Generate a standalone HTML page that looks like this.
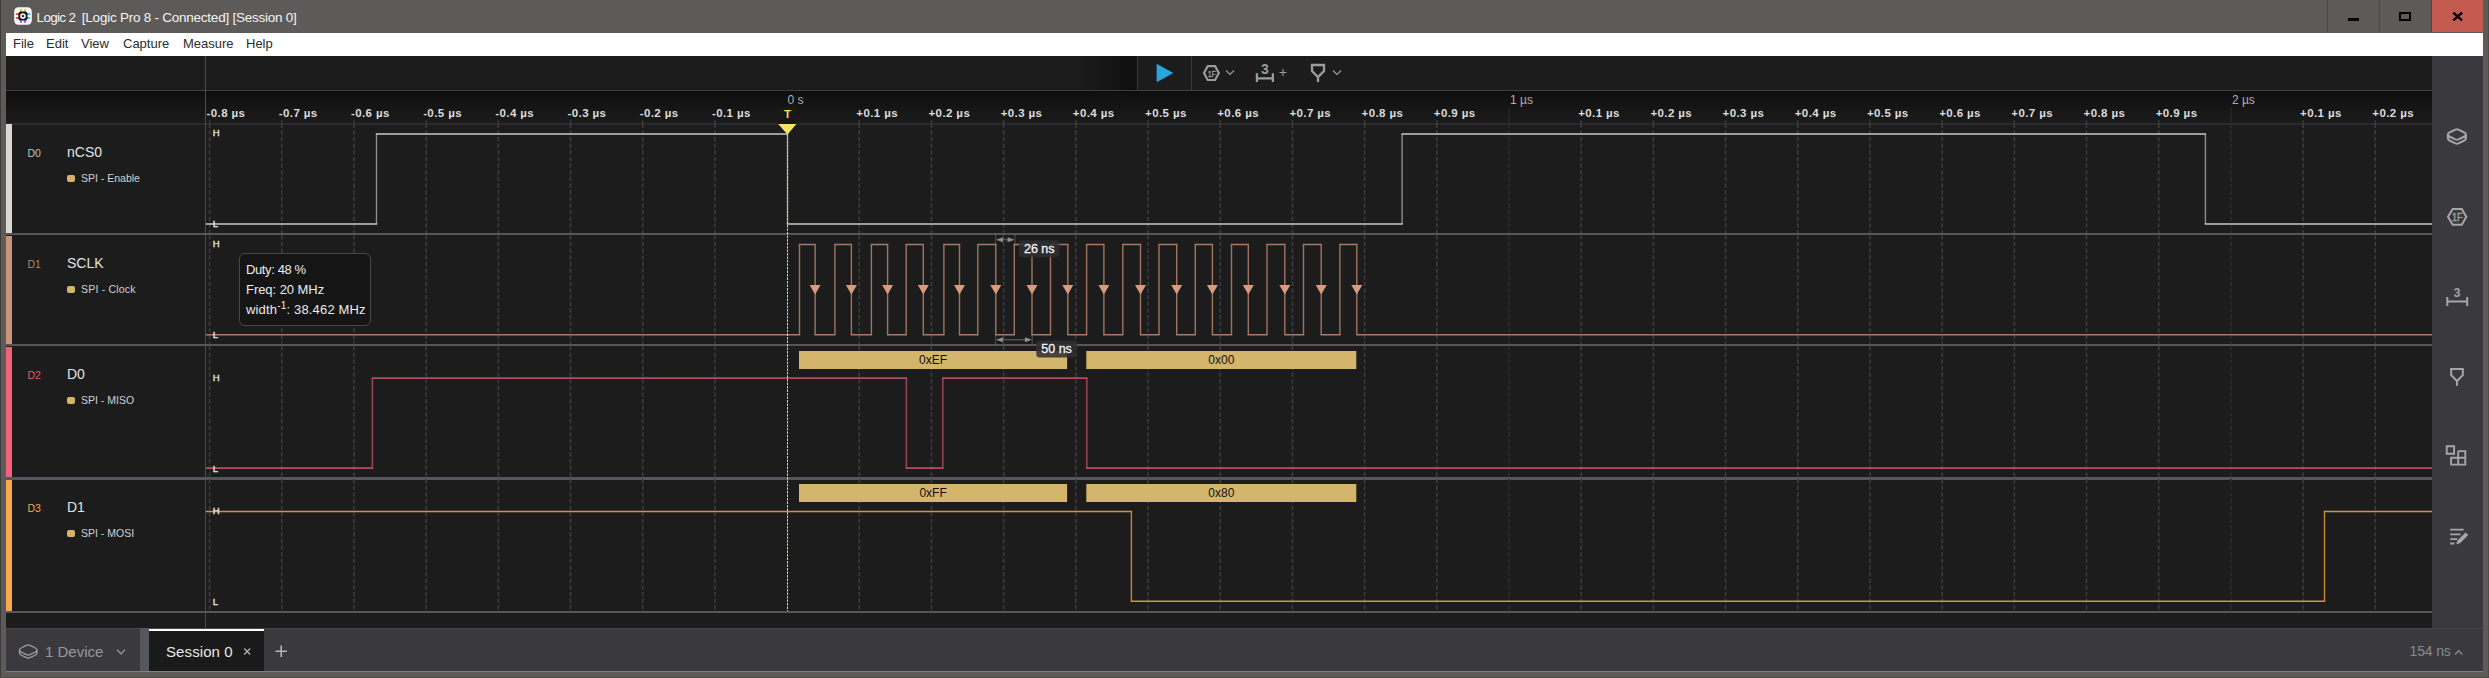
<!DOCTYPE html><html><head><meta charset="utf-8"><title>Logic 2</title><style>
*{box-sizing:border-box;margin:0;padding:0}
html,body{width:2489px;height:678px;overflow:hidden;background:#5d5b59;font-family:"Liberation Sans",sans-serif;}
.abs{position:absolute}
#title{left:0;top:0;width:2489px;height:33px;background:#5d5b59}
#title .t{left:36.6px;top:8px;font-size:13.5px;color:#f4f4f4;white-space:pre;letter-spacing:-0.24px;line-height:20px}
.wb{top:0;height:32px;width:52px;border-left:1px solid #4a4846}
#menu{left:6px;top:33px;width:2477px;height:23px;background:#fff}
#menu span{position:absolute;top:3.4px;font-size:13px;line-height:16px;color:#2c2c2c}
#app{left:6px;top:56px;width:2477px;height:616px;background:#1c1c1c;overflow:hidden}
#side{left:2431.5px;top:56px;width:51.5px;height:572px;background:#3a3a3e}
#bot{left:6px;top:628px;width:2477px;height:44px;background:#3a3a3e}
.lbl{color:#e2e2e2;font-size:14px;line-height:16px;white-space:nowrap}
.dn{font-size:10.5px;line-height:12px;white-space:nowrap}
.sub{color:#d2d2d2;font-size:10.5px;line-height:12px;white-space:nowrap}
.sq{width:8px;height:7px;border-radius:2px;background:#d4b466}
</style></head><body>
<div id="title" class="abs">
<div class="abs" style="left:0;top:0;width:1px;height:678px;background:#3c3b3a"></div>
<svg class="abs" style="left:14px;top:7px" width="18" height="18" viewBox="0 0 18 18">
<rect x="0.2" y="0.2" width="17.6" height="17.5" rx="4.2" fill="#f9f9fb"/>
<rect x="6" y="2" width="1.9" height="3.2" rx="0.5" fill="#ffc20e"/><rect x="9.9" y="2" width="2" height="3.2" rx="0.5" fill="#ffc20e"/>
<rect x="6" y="13" width="1.9" height="2.9" rx="0.5" fill="#c255f7"/><rect x="9.9" y="13" width="2" height="2.9" rx="0.5" fill="#c255f7"/>
<rect x="1.9" y="6.2" width="3.2" height="1.7" rx="0.5" fill="#f1452f"/><rect x="1.9" y="10" width="3.2" height="1.7" rx="0.5" fill="#f1452f"/>
<rect x="12.8" y="6.2" width="3.3" height="1.7" rx="0.5" fill="#22b2f7"/><rect x="12.8" y="10" width="3.3" height="1.7" rx="0.5" fill="#22b2f7"/>
<rect x="4.4" y="4.4" width="9.1" height="9.2" rx="2.6" fill="#14151c"/><circle cx="8.95" cy="9.05" r="2.9" fill="#ececee"/><circle cx="8.95" cy="9.05" r="1.15" fill="#14151c"/>
</svg>
<div class="abs t"><span style="letter-spacing:-0.7px">Logic 2</span><span style="margin-left:6.6px">[Logic Pro 8 - Connected] [Session 0]</span></div>
<div class="abs wb" style="left:2327px"><div class="abs" style="left:19.6px;top:18px;width:11.3px;height:2.6px;background:#000"></div></div>
<div class="abs wb" style="left:2379px"><div class="abs" style="left:19px;top:12px;width:12px;height:9px;border:2.4px solid #000"></div></div>
<div class="abs wb" style="left:2431px;background:#c45b50"><svg class="abs" style="left:20px;top:10px" width="12" height="12" viewBox="0 0 12 12"><path d="M1.3 2.6 L10 10.4 M10 2.6 L1.3 10.4" stroke="#000" stroke-width="2.5" fill="none"/></svg></div>
</div>
<div id="menu" class="abs">
<span style="left:7px">File</span>
<span style="left:40px">Edit</span>
<span style="left:75px">View</span>
<span style="left:117px">Capture</span>
<span style="left:177px">Measure</span>
<span style="left:240px">Help</span>
</div>
<div id="app" class="abs"></div>
<div class="abs" style="left:6px;top:56px;width:2426px;height:34px;background:linear-gradient(90deg,#1b1b1b 0,#1b1b1b 1075px,#0f0f0f 1131px,#1c1c1c 1132px)"></div>
<div class="abs" style="left:1137px;top:56px;width:55px;height:34px;background:#1c1c1c;border-left:1px solid #3a3a3d;border-right:1px solid #3a3a3d"></div>
<div class="abs" style="left:6px;top:90px;width:2426px;height:1px;background:#3e3e42"></div>
<div class="abs" style="left:6px;top:91px;width:2426px;height:33px;background:linear-gradient(180deg,#0e0e0e 0,#1c1c1c 100%)"></div>
<div class="abs" style="left:6px;top:123px;width:2426px;height:2px;background:#2a2a2e"></div>
<svg class="abs" style="left:1140px;top:56px" width="220" height="34" viewBox="0 0 220 34">
<path d="M16.6 7.8 L16.6 26.2 L33.4 17 Z" fill="#27a5dd"/>
<g fill="none" stroke="#9c9c9c" stroke-width="2.2">
<path d="M64 17.100 L67.700 10.200 L75.100 10.200 L78.800 17.100 L75.100 24 L67.700 24 Z"/>
<path d="M86 14.5 L90 18.5 L94 14.5" stroke-width="1.1"/>
<path d="M116.900 17.300 L116.900 26 M132.900 17.300 L132.900 26 M116.900 22.400 L132.900 22.400" stroke-width="2.2"/>
<path d="M139.5 16.5 L146.5 16.5 M143 13 L143 20" stroke-width="1.1"/>
<path d="M172 9 L184 9 L184 15 L178 21 L172 15 Z M178 21 L178 26" stroke-width="2.300"/>
<path d="M193 14.500 L197 18.5 L201 14.500" stroke-width="1.1"/>
</g>
<text x="68.100" y="21" font-size="9.8" fill="#9c9c9c" stroke="#9c9c9c" stroke-width="0.45" textLength="7.5" lengthAdjust="spacingAndGlyphs" font-family="Liberation Sans, sans-serif">1F</text>
<text x="124.8" y="18" font-size="14" font-weight="bold" fill="#9c9c9c" text-anchor="middle" font-family="Liberation Sans, sans-serif">3</text>
</svg>
<div class="abs" style="left:205px;top:56px;width:1px;height:572px;background:#4c4c50"></div>
<div class="abs" style="left:6px;top:124px;width:5.7px;height:109px;background:#d8d8d8"></div>
<div class="abs dn" style="left:27.5px;top:146.9px;color:#c0c0c0">D0</div>
<div class="abs lbl" style="left:67px;top:143.9px">nCS0</div>
<div class="abs sq" style="left:67px;top:174.60000000000002px"></div>
<div class="abs sub" style="left:81px;top:171.9px">SPI - Enable</div>
<div class="abs" style="left:6px;top:236px;width:5.7px;height:108px;background:#cb9579"></div>
<div class="abs dn" style="left:27.5px;top:257.5px;color:#b5846c">D1</div>
<div class="abs lbl" style="left:67px;top:254.5px">SCLK</div>
<div class="abs sq" style="left:67px;top:286.1px"></div>
<div class="abs sub" style="letter-spacing:0.2px;left:81px;top:283.4px">SPI - Clock</div>
<div class="abs" style="left:6px;top:347px;width:5.7px;height:130px;background:#f3627a"></div>
<div class="abs dn" style="left:27.5px;top:368.5px;color:#e85a70">D2</div>
<div class="abs lbl" style="left:67px;top:365.5px">D0</div>
<div class="abs sq" style="left:67px;top:397.09999999999997px"></div>
<div class="abs sub" style="left:81px;top:394.4px">SPI - MISO</div>
<div class="abs" style="left:6px;top:480px;width:5.7px;height:130.5px;background:#f4aa4a"></div>
<div class="abs dn" style="left:27.5px;top:501.5px;color:#f0a850">D3</div>
<div class="abs lbl" style="left:67px;top:498.5px">D1</div>
<div class="abs sq" style="left:67px;top:530.1px"></div>
<div class="abs sub" style="left:81px;top:527.4px">SPI - MOSI</div>
<div class="abs" style="left:6px;top:233.15px;width:2426px;height:2.2px;background:#55555b"></div>
<div class="abs" style="left:6px;top:344.25px;width:2426px;height:2.2px;background:#55555b"></div>
<div class="abs" style="left:6px;top:477.45px;width:2426px;height:2.2px;background:#55555b"></div>
<div class="abs" style="left:6px;top:610.65px;width:2426px;height:2.2px;background:#55555b"></div>
<svg class="abs" style="left:206px;top:90px" width="2226" height="538" viewBox="0 0 2226 538" font-family="Liberation Sans, sans-serif">
<line x1="3.58" y1="30.4" x2="3.58" y2="34" stroke="#3c3c42" stroke-width="1.55"/>
<line x1="3.58" y1="33.7" x2="3.58" y2="143" stroke="#3c3c42" stroke-width="1.55" stroke-dasharray="4.3 2.34"/>
<line x1="3.58" y1="145.3" x2="3.58" y2="254.2" stroke="#3c3c42" stroke-width="1.55" stroke-dasharray="4.3 2.34"/>
<line x1="3.58" y1="256.0" x2="3.58" y2="387.3" stroke="#3c3c42" stroke-width="1.55" stroke-dasharray="4.3 2.34"/>
<line x1="3.58" y1="389.1" x2="3.58" y2="520.2" stroke="#3c3c42" stroke-width="1.55" stroke-dasharray="4.3 2.34"/>
<line x1="75.77" y1="30.4" x2="75.77" y2="34" stroke="#3c3c42" stroke-width="1.55"/>
<line x1="75.77" y1="33.7" x2="75.77" y2="143" stroke="#3c3c42" stroke-width="1.55" stroke-dasharray="4.3 2.34"/>
<line x1="75.77" y1="145.3" x2="75.77" y2="254.2" stroke="#3c3c42" stroke-width="1.55" stroke-dasharray="4.3 2.34"/>
<line x1="75.77" y1="256.0" x2="75.77" y2="387.3" stroke="#3c3c42" stroke-width="1.55" stroke-dasharray="4.3 2.34"/>
<line x1="75.77" y1="389.1" x2="75.77" y2="520.2" stroke="#3c3c42" stroke-width="1.55" stroke-dasharray="4.3 2.34"/>
<line x1="147.96" y1="30.4" x2="147.96" y2="34" stroke="#3c3c42" stroke-width="1.55"/>
<line x1="147.96" y1="33.7" x2="147.96" y2="143" stroke="#3c3c42" stroke-width="1.55" stroke-dasharray="4.3 2.34"/>
<line x1="147.96" y1="145.3" x2="147.96" y2="254.2" stroke="#3c3c42" stroke-width="1.55" stroke-dasharray="4.3 2.34"/>
<line x1="147.96" y1="256.0" x2="147.96" y2="387.3" stroke="#3c3c42" stroke-width="1.55" stroke-dasharray="4.3 2.34"/>
<line x1="147.96" y1="389.1" x2="147.96" y2="520.2" stroke="#3c3c42" stroke-width="1.55" stroke-dasharray="4.3 2.34"/>
<line x1="220.15" y1="30.4" x2="220.15" y2="34" stroke="#3c3c42" stroke-width="1.55"/>
<line x1="220.15" y1="33.7" x2="220.15" y2="143" stroke="#3c3c42" stroke-width="1.55" stroke-dasharray="4.3 2.34"/>
<line x1="220.15" y1="145.3" x2="220.15" y2="254.2" stroke="#3c3c42" stroke-width="1.55" stroke-dasharray="4.3 2.34"/>
<line x1="220.15" y1="256.0" x2="220.15" y2="387.3" stroke="#3c3c42" stroke-width="1.55" stroke-dasharray="4.3 2.34"/>
<line x1="220.15" y1="389.1" x2="220.15" y2="520.2" stroke="#3c3c42" stroke-width="1.55" stroke-dasharray="4.3 2.34"/>
<line x1="292.34" y1="30.4" x2="292.34" y2="34" stroke="#3c3c42" stroke-width="1.55"/>
<line x1="292.34" y1="33.7" x2="292.34" y2="143" stroke="#3c3c42" stroke-width="1.55" stroke-dasharray="4.3 2.34"/>
<line x1="292.34" y1="145.3" x2="292.34" y2="254.2" stroke="#3c3c42" stroke-width="1.55" stroke-dasharray="4.3 2.34"/>
<line x1="292.34" y1="256.0" x2="292.34" y2="387.3" stroke="#3c3c42" stroke-width="1.55" stroke-dasharray="4.3 2.34"/>
<line x1="292.34" y1="389.1" x2="292.34" y2="520.2" stroke="#3c3c42" stroke-width="1.55" stroke-dasharray="4.3 2.34"/>
<line x1="364.53" y1="30.4" x2="364.53" y2="34" stroke="#3c3c42" stroke-width="1.55"/>
<line x1="364.53" y1="33.7" x2="364.53" y2="143" stroke="#3c3c42" stroke-width="1.55" stroke-dasharray="4.3 2.34"/>
<line x1="364.53" y1="145.3" x2="364.53" y2="254.2" stroke="#3c3c42" stroke-width="1.55" stroke-dasharray="4.3 2.34"/>
<line x1="364.53" y1="256.0" x2="364.53" y2="387.3" stroke="#3c3c42" stroke-width="1.55" stroke-dasharray="4.3 2.34"/>
<line x1="364.53" y1="389.1" x2="364.53" y2="520.2" stroke="#3c3c42" stroke-width="1.55" stroke-dasharray="4.3 2.34"/>
<line x1="436.72" y1="30.4" x2="436.72" y2="34" stroke="#3c3c42" stroke-width="1.55"/>
<line x1="436.72" y1="33.7" x2="436.72" y2="143" stroke="#3c3c42" stroke-width="1.55" stroke-dasharray="4.3 2.34"/>
<line x1="436.72" y1="145.3" x2="436.72" y2="254.2" stroke="#3c3c42" stroke-width="1.55" stroke-dasharray="4.3 2.34"/>
<line x1="436.72" y1="256.0" x2="436.72" y2="387.3" stroke="#3c3c42" stroke-width="1.55" stroke-dasharray="4.3 2.34"/>
<line x1="436.72" y1="389.1" x2="436.72" y2="520.2" stroke="#3c3c42" stroke-width="1.55" stroke-dasharray="4.3 2.34"/>
<line x1="508.91" y1="30.4" x2="508.91" y2="34" stroke="#3c3c42" stroke-width="1.55"/>
<line x1="508.91" y1="33.7" x2="508.91" y2="143" stroke="#3c3c42" stroke-width="1.55" stroke-dasharray="4.3 2.34"/>
<line x1="508.91" y1="145.3" x2="508.91" y2="254.2" stroke="#3c3c42" stroke-width="1.55" stroke-dasharray="4.3 2.34"/>
<line x1="508.91" y1="256.0" x2="508.91" y2="387.3" stroke="#3c3c42" stroke-width="1.55" stroke-dasharray="4.3 2.34"/>
<line x1="508.91" y1="389.1" x2="508.91" y2="520.2" stroke="#3c3c42" stroke-width="1.55" stroke-dasharray="4.3 2.34"/>
<line x1="653.29" y1="30.4" x2="653.29" y2="34" stroke="#3c3c42" stroke-width="1.55"/>
<line x1="653.29" y1="33.7" x2="653.29" y2="143" stroke="#3c3c42" stroke-width="1.55" stroke-dasharray="4.3 2.34"/>
<line x1="653.29" y1="145.3" x2="653.29" y2="254.2" stroke="#3c3c42" stroke-width="1.55" stroke-dasharray="4.3 2.34"/>
<line x1="653.29" y1="256.0" x2="653.29" y2="387.3" stroke="#3c3c42" stroke-width="1.55" stroke-dasharray="4.3 2.34"/>
<line x1="653.29" y1="389.1" x2="653.29" y2="520.2" stroke="#3c3c42" stroke-width="1.55" stroke-dasharray="4.3 2.34"/>
<line x1="725.48" y1="30.4" x2="725.48" y2="34" stroke="#3c3c42" stroke-width="1.55"/>
<line x1="725.48" y1="33.7" x2="725.48" y2="143" stroke="#3c3c42" stroke-width="1.55" stroke-dasharray="4.3 2.34"/>
<line x1="725.48" y1="145.3" x2="725.48" y2="254.2" stroke="#3c3c42" stroke-width="1.55" stroke-dasharray="4.3 2.34"/>
<line x1="725.48" y1="256.0" x2="725.48" y2="387.3" stroke="#3c3c42" stroke-width="1.55" stroke-dasharray="4.3 2.34"/>
<line x1="725.48" y1="389.1" x2="725.48" y2="520.2" stroke="#3c3c42" stroke-width="1.55" stroke-dasharray="4.3 2.34"/>
<line x1="797.67" y1="30.4" x2="797.67" y2="34" stroke="#3c3c42" stroke-width="1.55"/>
<line x1="797.67" y1="33.7" x2="797.67" y2="143" stroke="#3c3c42" stroke-width="1.55" stroke-dasharray="4.3 2.34"/>
<line x1="797.67" y1="145.3" x2="797.67" y2="254.2" stroke="#3c3c42" stroke-width="1.55" stroke-dasharray="4.3 2.34"/>
<line x1="797.67" y1="256.0" x2="797.67" y2="387.3" stroke="#3c3c42" stroke-width="1.55" stroke-dasharray="4.3 2.34"/>
<line x1="797.67" y1="389.1" x2="797.67" y2="520.2" stroke="#3c3c42" stroke-width="1.55" stroke-dasharray="4.3 2.34"/>
<line x1="869.86" y1="30.4" x2="869.86" y2="34" stroke="#3c3c42" stroke-width="1.55"/>
<line x1="869.86" y1="33.7" x2="869.86" y2="143" stroke="#3c3c42" stroke-width="1.55" stroke-dasharray="4.3 2.34"/>
<line x1="869.86" y1="145.3" x2="869.86" y2="254.2" stroke="#3c3c42" stroke-width="1.55" stroke-dasharray="4.3 2.34"/>
<line x1="869.86" y1="256.0" x2="869.86" y2="387.3" stroke="#3c3c42" stroke-width="1.55" stroke-dasharray="4.3 2.34"/>
<line x1="869.86" y1="389.1" x2="869.86" y2="520.2" stroke="#3c3c42" stroke-width="1.55" stroke-dasharray="4.3 2.34"/>
<line x1="942.05" y1="30.4" x2="942.05" y2="34" stroke="#3c3c42" stroke-width="1.55"/>
<line x1="942.05" y1="33.7" x2="942.05" y2="143" stroke="#3c3c42" stroke-width="1.55" stroke-dasharray="4.3 2.34"/>
<line x1="942.05" y1="145.3" x2="942.05" y2="254.2" stroke="#3c3c42" stroke-width="1.55" stroke-dasharray="4.3 2.34"/>
<line x1="942.05" y1="256.0" x2="942.05" y2="387.3" stroke="#3c3c42" stroke-width="1.55" stroke-dasharray="4.3 2.34"/>
<line x1="942.05" y1="389.1" x2="942.05" y2="520.2" stroke="#3c3c42" stroke-width="1.55" stroke-dasharray="4.3 2.34"/>
<line x1="1014.24" y1="30.4" x2="1014.24" y2="34" stroke="#3c3c42" stroke-width="1.55"/>
<line x1="1014.24" y1="33.7" x2="1014.24" y2="143" stroke="#3c3c42" stroke-width="1.55" stroke-dasharray="4.3 2.34"/>
<line x1="1014.24" y1="145.3" x2="1014.24" y2="254.2" stroke="#3c3c42" stroke-width="1.55" stroke-dasharray="4.3 2.34"/>
<line x1="1014.24" y1="256.0" x2="1014.24" y2="387.3" stroke="#3c3c42" stroke-width="1.55" stroke-dasharray="4.3 2.34"/>
<line x1="1014.24" y1="389.1" x2="1014.24" y2="520.2" stroke="#3c3c42" stroke-width="1.55" stroke-dasharray="4.3 2.34"/>
<line x1="1086.43" y1="30.4" x2="1086.43" y2="34" stroke="#3c3c42" stroke-width="1.55"/>
<line x1="1086.43" y1="33.7" x2="1086.43" y2="143" stroke="#3c3c42" stroke-width="1.55" stroke-dasharray="4.3 2.34"/>
<line x1="1086.43" y1="145.3" x2="1086.43" y2="254.2" stroke="#3c3c42" stroke-width="1.55" stroke-dasharray="4.3 2.34"/>
<line x1="1086.43" y1="256.0" x2="1086.43" y2="387.3" stroke="#3c3c42" stroke-width="1.55" stroke-dasharray="4.3 2.34"/>
<line x1="1086.43" y1="389.1" x2="1086.43" y2="520.2" stroke="#3c3c42" stroke-width="1.55" stroke-dasharray="4.3 2.34"/>
<line x1="1158.62" y1="30.4" x2="1158.62" y2="34" stroke="#3c3c42" stroke-width="1.55"/>
<line x1="1158.62" y1="33.7" x2="1158.62" y2="143" stroke="#3c3c42" stroke-width="1.55" stroke-dasharray="4.3 2.34"/>
<line x1="1158.62" y1="145.3" x2="1158.62" y2="254.2" stroke="#3c3c42" stroke-width="1.55" stroke-dasharray="4.3 2.34"/>
<line x1="1158.62" y1="256.0" x2="1158.62" y2="387.3" stroke="#3c3c42" stroke-width="1.55" stroke-dasharray="4.3 2.34"/>
<line x1="1158.62" y1="389.1" x2="1158.62" y2="520.2" stroke="#3c3c42" stroke-width="1.55" stroke-dasharray="4.3 2.34"/>
<line x1="1230.81" y1="30.4" x2="1230.81" y2="34" stroke="#3c3c42" stroke-width="1.55"/>
<line x1="1230.81" y1="33.7" x2="1230.81" y2="143" stroke="#3c3c42" stroke-width="1.55" stroke-dasharray="4.3 2.34"/>
<line x1="1230.81" y1="145.3" x2="1230.81" y2="254.2" stroke="#3c3c42" stroke-width="1.55" stroke-dasharray="4.3 2.34"/>
<line x1="1230.81" y1="256.0" x2="1230.81" y2="387.3" stroke="#3c3c42" stroke-width="1.55" stroke-dasharray="4.3 2.34"/>
<line x1="1230.81" y1="389.1" x2="1230.81" y2="520.2" stroke="#3c3c42" stroke-width="1.55" stroke-dasharray="4.3 2.34"/>
<line x1="1303.0" y1="17.5" x2="1303.0" y2="34" stroke="#2c2c30" stroke-width="1.1"/>
<line x1="1303.0" y1="33.7" x2="1303.0" y2="143" stroke="#2c2c30" stroke-width="1.55" stroke-dasharray="4.3 2.34"/>
<line x1="1303.0" y1="145.3" x2="1303.0" y2="254.2" stroke="#2c2c30" stroke-width="1.55" stroke-dasharray="4.3 2.34"/>
<line x1="1303.0" y1="256.0" x2="1303.0" y2="387.3" stroke="#2c2c30" stroke-width="1.55" stroke-dasharray="4.3 2.34"/>
<line x1="1303.0" y1="389.1" x2="1303.0" y2="520.2" stroke="#2c2c30" stroke-width="1.55" stroke-dasharray="4.3 2.34"/>
<line x1="1375.19" y1="30.4" x2="1375.19" y2="34" stroke="#3c3c42" stroke-width="1.55"/>
<line x1="1375.19" y1="33.7" x2="1375.19" y2="143" stroke="#3c3c42" stroke-width="1.55" stroke-dasharray="4.3 2.34"/>
<line x1="1375.19" y1="145.3" x2="1375.19" y2="254.2" stroke="#3c3c42" stroke-width="1.55" stroke-dasharray="4.3 2.34"/>
<line x1="1375.19" y1="256.0" x2="1375.19" y2="387.3" stroke="#3c3c42" stroke-width="1.55" stroke-dasharray="4.3 2.34"/>
<line x1="1375.19" y1="389.1" x2="1375.19" y2="520.2" stroke="#3c3c42" stroke-width="1.55" stroke-dasharray="4.3 2.34"/>
<line x1="1447.38" y1="30.4" x2="1447.38" y2="34" stroke="#3c3c42" stroke-width="1.55"/>
<line x1="1447.38" y1="33.7" x2="1447.38" y2="143" stroke="#3c3c42" stroke-width="1.55" stroke-dasharray="4.3 2.34"/>
<line x1="1447.38" y1="145.3" x2="1447.38" y2="254.2" stroke="#3c3c42" stroke-width="1.55" stroke-dasharray="4.3 2.34"/>
<line x1="1447.38" y1="256.0" x2="1447.38" y2="387.3" stroke="#3c3c42" stroke-width="1.55" stroke-dasharray="4.3 2.34"/>
<line x1="1447.38" y1="389.1" x2="1447.38" y2="520.2" stroke="#3c3c42" stroke-width="1.55" stroke-dasharray="4.3 2.34"/>
<line x1="1519.57" y1="30.4" x2="1519.57" y2="34" stroke="#3c3c42" stroke-width="1.55"/>
<line x1="1519.57" y1="33.7" x2="1519.57" y2="143" stroke="#3c3c42" stroke-width="1.55" stroke-dasharray="4.3 2.34"/>
<line x1="1519.57" y1="145.3" x2="1519.57" y2="254.2" stroke="#3c3c42" stroke-width="1.55" stroke-dasharray="4.3 2.34"/>
<line x1="1519.57" y1="256.0" x2="1519.57" y2="387.3" stroke="#3c3c42" stroke-width="1.55" stroke-dasharray="4.3 2.34"/>
<line x1="1519.57" y1="389.1" x2="1519.57" y2="520.2" stroke="#3c3c42" stroke-width="1.55" stroke-dasharray="4.3 2.34"/>
<line x1="1591.76" y1="30.4" x2="1591.76" y2="34" stroke="#3c3c42" stroke-width="1.55"/>
<line x1="1591.76" y1="33.7" x2="1591.76" y2="143" stroke="#3c3c42" stroke-width="1.55" stroke-dasharray="4.3 2.34"/>
<line x1="1591.76" y1="145.3" x2="1591.76" y2="254.2" stroke="#3c3c42" stroke-width="1.55" stroke-dasharray="4.3 2.34"/>
<line x1="1591.76" y1="256.0" x2="1591.76" y2="387.3" stroke="#3c3c42" stroke-width="1.55" stroke-dasharray="4.3 2.34"/>
<line x1="1591.76" y1="389.1" x2="1591.76" y2="520.2" stroke="#3c3c42" stroke-width="1.55" stroke-dasharray="4.3 2.34"/>
<line x1="1663.95" y1="30.4" x2="1663.95" y2="34" stroke="#3c3c42" stroke-width="1.55"/>
<line x1="1663.95" y1="33.7" x2="1663.95" y2="143" stroke="#3c3c42" stroke-width="1.55" stroke-dasharray="4.3 2.34"/>
<line x1="1663.95" y1="145.3" x2="1663.95" y2="254.2" stroke="#3c3c42" stroke-width="1.55" stroke-dasharray="4.3 2.34"/>
<line x1="1663.95" y1="256.0" x2="1663.95" y2="387.3" stroke="#3c3c42" stroke-width="1.55" stroke-dasharray="4.3 2.34"/>
<line x1="1663.95" y1="389.1" x2="1663.95" y2="520.2" stroke="#3c3c42" stroke-width="1.55" stroke-dasharray="4.3 2.34"/>
<line x1="1736.14" y1="30.4" x2="1736.14" y2="34" stroke="#3c3c42" stroke-width="1.55"/>
<line x1="1736.14" y1="33.7" x2="1736.14" y2="143" stroke="#3c3c42" stroke-width="1.55" stroke-dasharray="4.3 2.34"/>
<line x1="1736.14" y1="145.3" x2="1736.14" y2="254.2" stroke="#3c3c42" stroke-width="1.55" stroke-dasharray="4.3 2.34"/>
<line x1="1736.14" y1="256.0" x2="1736.14" y2="387.3" stroke="#3c3c42" stroke-width="1.55" stroke-dasharray="4.3 2.34"/>
<line x1="1736.14" y1="389.1" x2="1736.14" y2="520.2" stroke="#3c3c42" stroke-width="1.55" stroke-dasharray="4.3 2.34"/>
<line x1="1808.33" y1="30.4" x2="1808.33" y2="34" stroke="#3c3c42" stroke-width="1.55"/>
<line x1="1808.33" y1="33.7" x2="1808.33" y2="143" stroke="#3c3c42" stroke-width="1.55" stroke-dasharray="4.3 2.34"/>
<line x1="1808.33" y1="145.3" x2="1808.33" y2="254.2" stroke="#3c3c42" stroke-width="1.55" stroke-dasharray="4.3 2.34"/>
<line x1="1808.33" y1="256.0" x2="1808.33" y2="387.3" stroke="#3c3c42" stroke-width="1.55" stroke-dasharray="4.3 2.34"/>
<line x1="1808.33" y1="389.1" x2="1808.33" y2="520.2" stroke="#3c3c42" stroke-width="1.55" stroke-dasharray="4.3 2.34"/>
<line x1="1880.52" y1="30.4" x2="1880.52" y2="34" stroke="#3c3c42" stroke-width="1.55"/>
<line x1="1880.52" y1="33.7" x2="1880.52" y2="143" stroke="#3c3c42" stroke-width="1.55" stroke-dasharray="4.3 2.34"/>
<line x1="1880.52" y1="145.3" x2="1880.52" y2="254.2" stroke="#3c3c42" stroke-width="1.55" stroke-dasharray="4.3 2.34"/>
<line x1="1880.52" y1="256.0" x2="1880.52" y2="387.3" stroke="#3c3c42" stroke-width="1.55" stroke-dasharray="4.3 2.34"/>
<line x1="1880.52" y1="389.1" x2="1880.52" y2="520.2" stroke="#3c3c42" stroke-width="1.55" stroke-dasharray="4.3 2.34"/>
<line x1="1952.71" y1="30.4" x2="1952.71" y2="34" stroke="#3c3c42" stroke-width="1.55"/>
<line x1="1952.71" y1="33.7" x2="1952.71" y2="143" stroke="#3c3c42" stroke-width="1.55" stroke-dasharray="4.3 2.34"/>
<line x1="1952.71" y1="145.3" x2="1952.71" y2="254.2" stroke="#3c3c42" stroke-width="1.55" stroke-dasharray="4.3 2.34"/>
<line x1="1952.71" y1="256.0" x2="1952.71" y2="387.3" stroke="#3c3c42" stroke-width="1.55" stroke-dasharray="4.3 2.34"/>
<line x1="1952.71" y1="389.1" x2="1952.71" y2="520.2" stroke="#3c3c42" stroke-width="1.55" stroke-dasharray="4.3 2.34"/>
<line x1="2024.9" y1="17.5" x2="2024.9" y2="34" stroke="#2c2c30" stroke-width="1.1"/>
<line x1="2024.9" y1="33.7" x2="2024.9" y2="143" stroke="#2c2c30" stroke-width="1.55" stroke-dasharray="4.3 2.34"/>
<line x1="2024.9" y1="145.3" x2="2024.9" y2="254.2" stroke="#2c2c30" stroke-width="1.55" stroke-dasharray="4.3 2.34"/>
<line x1="2024.9" y1="256.0" x2="2024.9" y2="387.3" stroke="#2c2c30" stroke-width="1.55" stroke-dasharray="4.3 2.34"/>
<line x1="2024.9" y1="389.1" x2="2024.9" y2="520.2" stroke="#2c2c30" stroke-width="1.55" stroke-dasharray="4.3 2.34"/>
<line x1="2097.09" y1="30.4" x2="2097.09" y2="34" stroke="#3c3c42" stroke-width="1.55"/>
<line x1="2097.09" y1="33.7" x2="2097.09" y2="143" stroke="#3c3c42" stroke-width="1.55" stroke-dasharray="4.3 2.34"/>
<line x1="2097.09" y1="145.3" x2="2097.09" y2="254.2" stroke="#3c3c42" stroke-width="1.55" stroke-dasharray="4.3 2.34"/>
<line x1="2097.09" y1="256.0" x2="2097.09" y2="387.3" stroke="#3c3c42" stroke-width="1.55" stroke-dasharray="4.3 2.34"/>
<line x1="2097.09" y1="389.1" x2="2097.09" y2="520.2" stroke="#3c3c42" stroke-width="1.55" stroke-dasharray="4.3 2.34"/>
<line x1="2169.28" y1="30.4" x2="2169.28" y2="34" stroke="#3c3c42" stroke-width="1.55"/>
<line x1="2169.28" y1="33.7" x2="2169.28" y2="143" stroke="#3c3c42" stroke-width="1.55" stroke-dasharray="4.3 2.34"/>
<line x1="2169.28" y1="145.3" x2="2169.28" y2="254.2" stroke="#3c3c42" stroke-width="1.55" stroke-dasharray="4.3 2.34"/>
<line x1="2169.28" y1="256.0" x2="2169.28" y2="387.3" stroke="#3c3c42" stroke-width="1.55" stroke-dasharray="4.3 2.34"/>
<line x1="2169.28" y1="389.1" x2="2169.28" y2="520.2" stroke="#3c3c42" stroke-width="1.55" stroke-dasharray="4.3 2.34"/>
<text x="0.58" y="27" font-size="11.5" letter-spacing="0.4" font-weight="bold" fill="#dcdcdc">-0.8 µs</text>
<text x="72.77" y="27" font-size="11.5" letter-spacing="0.4" font-weight="bold" fill="#dcdcdc">-0.7 µs</text>
<text x="144.96" y="27" font-size="11.5" letter-spacing="0.4" font-weight="bold" fill="#dcdcdc">-0.6 µs</text>
<text x="217.15" y="27" font-size="11.5" letter-spacing="0.4" font-weight="bold" fill="#dcdcdc">-0.5 µs</text>
<text x="289.34" y="27" font-size="11.5" letter-spacing="0.4" font-weight="bold" fill="#dcdcdc">-0.4 µs</text>
<text x="361.53" y="27" font-size="11.5" letter-spacing="0.4" font-weight="bold" fill="#dcdcdc">-0.3 µs</text>
<text x="433.72" y="27" font-size="11.5" letter-spacing="0.4" font-weight="bold" fill="#dcdcdc">-0.2 µs</text>
<text x="505.91" y="27" font-size="11.5" letter-spacing="0.4" font-weight="bold" fill="#dcdcdc">-0.1 µs</text>
<text x="581.6" y="14" font-size="12" fill="#b0b0b0">0 s</text>
<text x="650.29" y="27" font-size="11.5" letter-spacing="0.4" font-weight="bold" fill="#dcdcdc">+0.1 µs</text>
<text x="722.48" y="27" font-size="11.5" letter-spacing="0.4" font-weight="bold" fill="#dcdcdc">+0.2 µs</text>
<text x="794.67" y="27" font-size="11.5" letter-spacing="0.4" font-weight="bold" fill="#dcdcdc">+0.3 µs</text>
<text x="866.86" y="27" font-size="11.5" letter-spacing="0.4" font-weight="bold" fill="#dcdcdc">+0.4 µs</text>
<text x="939.05" y="27" font-size="11.5" letter-spacing="0.4" font-weight="bold" fill="#dcdcdc">+0.5 µs</text>
<text x="1011.24" y="27" font-size="11.5" letter-spacing="0.4" font-weight="bold" fill="#dcdcdc">+0.6 µs</text>
<text x="1083.43" y="27" font-size="11.5" letter-spacing="0.4" font-weight="bold" fill="#dcdcdc">+0.7 µs</text>
<text x="1155.62" y="27" font-size="11.5" letter-spacing="0.4" font-weight="bold" fill="#dcdcdc">+0.8 µs</text>
<text x="1227.81" y="27" font-size="11.5" letter-spacing="0.4" font-weight="bold" fill="#dcdcdc">+0.9 µs</text>
<text x="1304.0" y="14" font-size="12" fill="#b0b0b0">1 µs</text>
<text x="1372.19" y="27" font-size="11.5" letter-spacing="0.4" font-weight="bold" fill="#dcdcdc">+0.1 µs</text>
<text x="1444.38" y="27" font-size="11.5" letter-spacing="0.4" font-weight="bold" fill="#dcdcdc">+0.2 µs</text>
<text x="1516.57" y="27" font-size="11.5" letter-spacing="0.4" font-weight="bold" fill="#dcdcdc">+0.3 µs</text>
<text x="1588.76" y="27" font-size="11.5" letter-spacing="0.4" font-weight="bold" fill="#dcdcdc">+0.4 µs</text>
<text x="1660.95" y="27" font-size="11.5" letter-spacing="0.4" font-weight="bold" fill="#dcdcdc">+0.5 µs</text>
<text x="1733.14" y="27" font-size="11.5" letter-spacing="0.4" font-weight="bold" fill="#dcdcdc">+0.6 µs</text>
<text x="1805.33" y="27" font-size="11.5" letter-spacing="0.4" font-weight="bold" fill="#dcdcdc">+0.7 µs</text>
<text x="1877.52" y="27" font-size="11.5" letter-spacing="0.4" font-weight="bold" fill="#dcdcdc">+0.8 µs</text>
<text x="1949.71" y="27" font-size="11.5" letter-spacing="0.4" font-weight="bold" fill="#dcdcdc">+0.9 µs</text>
<text x="2025.9" y="14" font-size="12" fill="#b0b0b0">2 µs</text>
<text x="2094.09" y="27" font-size="11.5" letter-spacing="0.4" font-weight="bold" fill="#dcdcdc">+0.1 µs</text>
<text x="2166.28" y="27" font-size="11.5" letter-spacing="0.4" font-weight="bold" fill="#dcdcdc">+0.2 µs</text>
<rect x="572" y="17" width="18.5" height="17" fill="#181818"/>
<text x="581.5" y="28" font-size="11.5" font-weight="bold" fill="#f2df5c" text-anchor="middle">T</text>
<path d="M170.5 44.0 V134 M581.5 44.0 V134 M1196.1 44.0 V134 M1999.4 44.0 V134" fill="none" stroke="#8c8c8c" stroke-width="1.4"/>
<path d="M0 134 H171.2 M169.8 44.0 H582.2 M580.8 134 H1196.8 M1195.4 44.0 H2000.1 M1998.7 134 H2226" fill="none" stroke="#c6c6c6" stroke-width="1.7"/>
<path d="M593.5 154.6 V244.8 M609.1 154.6 V244.8 M628.9 154.6 V244.8 M645.4 154.6 V244.8 M665.4 154.6 V244.8 M681.6 154.6 V244.8 M700.2 154.6 V244.8 M717.3 154.6 V244.8 M737.9 154.6 V244.8 M753.5 154.6 V244.8 M771.8 154.6 V244.8 M789.8 154.6 V244.8 M808.3 154.6 V244.8 M826.0 154.6 V244.8 M844.5 154.6 V244.8 M861.8 154.6 V244.8 M880.6 154.6 V244.8 M897.9 154.6 V244.8 M916.8 154.6 V244.8 M934.5 154.6 V244.8 M953.0 154.6 V244.8 M970.7 154.6 V244.8 M989.3 154.6 V244.8 M1006.4 154.6 V244.8 M1025.5 154.6 V244.8 M1042.3 154.6 V244.8 M1061.0 154.6 V244.8 M1078.8 154.6 V244.8 M1097.5 154.6 V244.8 M1115.2 154.6 V244.8 M1133.9 154.6 V244.8 M1150.8 154.6 V244.8" fill="none" stroke="#a07460" stroke-width="1.4"/>
<path d="M0 244.8 H594.2 M592.8 154.6 H609.8 M608.4 244.8 H629.6 M628.2 154.6 H646.1 M644.7 244.8 H666.1 M664.7 154.6 H682.3 M680.9 244.8 H700.9 M699.5 154.6 H718.0 M716.6 244.8 H738.6 M737.2 154.6 H754.2 M752.8 244.8 H772.5 M771.1 154.6 H790.5 M789.1 244.8 H809.0 M807.6 154.6 H826.7 M825.3 244.8 H845.2 M843.8 154.6 H862.5 M861.1 244.8 H881.3 M879.9 154.6 H898.6 M897.2 244.8 H917.5 M916.1 154.6 H935.2 M933.8 244.8 H953.7 M952.3 154.6 H971.4 M970.0 244.8 H990.0 M988.6 154.6 H1007.1 M1005.7 244.8 H1026.2 M1024.8 154.6 H1043.0 M1041.6 244.8 H1061.7 M1060.3 154.6 H1079.5 M1078.1 244.8 H1098.2 M1096.8 154.6 H1115.9 M1114.5 244.8 H1134.6 M1133.2 154.6 H1151.5 M1150.1 244.8 H2226" fill="none" stroke="#a87964" stroke-width="1.5"/>
<path d="M603.6 195.1 L614.6 195.1 L609.1 204.6 Z" fill="#d79b7f"/>
<path d="M639.9 195.1 L650.9 195.1 L645.4 204.6 Z" fill="#d79b7f"/>
<path d="M676.1 195.1 L687.1 195.1 L681.6 204.6 Z" fill="#d79b7f"/>
<path d="M711.8 195.1 L722.8 195.1 L717.3 204.6 Z" fill="#d79b7f"/>
<path d="M748.0 195.1 L759.0 195.1 L753.5 204.6 Z" fill="#d79b7f"/>
<path d="M784.3 195.1 L795.3 195.1 L789.8 204.6 Z" fill="#d79b7f"/>
<path d="M820.5 195.1 L831.5 195.1 L826.0 204.6 Z" fill="#d79b7f"/>
<path d="M856.3 195.1 L867.3 195.1 L861.8 204.6 Z" fill="#d79b7f"/>
<path d="M892.4 195.1 L903.4 195.1 L897.9 204.6 Z" fill="#d79b7f"/>
<path d="M929.0 195.1 L940.0 195.1 L934.5 204.6 Z" fill="#d79b7f"/>
<path d="M965.2 195.1 L976.2 195.1 L970.7 204.6 Z" fill="#d79b7f"/>
<path d="M1000.9 195.1 L1011.9 195.1 L1006.4 204.6 Z" fill="#d79b7f"/>
<path d="M1036.8 195.1 L1047.8 195.1 L1042.3 204.6 Z" fill="#d79b7f"/>
<path d="M1073.3 195.1 L1084.3 195.1 L1078.8 204.6 Z" fill="#d79b7f"/>
<path d="M1109.7 195.1 L1120.7 195.1 L1115.2 204.6 Z" fill="#d79b7f"/>
<path d="M1145.3 195.1 L1156.3 195.1 L1150.8 204.6 Z" fill="#d79b7f"/>
<path d="M166.4 288.2 V378 M700.4 288.2 V378 M736.8 288.2 V378 M880.8 288.2 V378" fill="none" stroke="#9c4656" stroke-width="1.5"/>
<path d="M0 378 H167.15 M165.65 288.2 H701.15 M699.65 378 H737.55 M736.05 288.2 H881.55 M880.05 378 H2226" fill="none" stroke="#b44e5e" stroke-width="1.75"/>
<path d="M925.4 421.4 V511.2 M2118.5 421.4 V511.2" fill="none" stroke="#c48638" stroke-width="1.4"/>
<path d="M0 421.4 H926.1 M924.7 511.2 H2119.2 M2117.8 421.4 H2226" fill="none" stroke="#d49141" stroke-width="1.5"/>
<line x1="581.5" y1="44" x2="581.5" y2="521" stroke="#e6d85e" stroke-width="1.05" stroke-dasharray="2.4 1.1"/>
<path d="M572.2 34 L590.4 34 L581.5 44.5 Z" fill="#f5e560"/>
<text x="6.8" y="46.3" font-size="9.5" fill="#e8e8e8" stroke="#e8e8e8" stroke-width="0.3">H</text>
<text x="6.8" y="137" font-size="9.5" fill="#e8e8e8" stroke="#e8e8e8" stroke-width="0.3">L</text>
<text x="6.8" y="157.3" font-size="9.5" fill="#e8e8e8" stroke="#e8e8e8" stroke-width="0.3">H</text>
<text x="6.8" y="248" font-size="9.5" fill="#e8e8e8" stroke="#e8e8e8" stroke-width="0.3">L</text>
<text x="6.8" y="290.8" font-size="9.5" fill="#e8e8e8" stroke="#e8e8e8" stroke-width="0.3">H</text>
<text x="6.8" y="381.5" font-size="9.5" fill="#e8e8e8" stroke="#e8e8e8" stroke-width="0.3">L</text>
<text x="6.8" y="423.8" font-size="9.5" fill="#e8e8e8" stroke="#e8e8e8" stroke-width="0.3">H</text>
<text x="6.8" y="514.5" font-size="9.5" fill="#e8e8e8" stroke="#e8e8e8" stroke-width="0.3">L</text>
<rect x="593" y="261" width="268.1" height="18" fill="#d3b56b"/>
<text x="727.05" y="273.9" font-size="12" fill="#111" text-anchor="middle">0xEF</text>
<rect x="880.3" y="261" width="270.0" height="18" fill="#d3b56b"/>
<text x="1015.3" y="273.9" font-size="12" fill="#111" text-anchor="middle">0x00</text>
<rect x="593" y="394" width="268.1" height="18" fill="#d3b56b"/>
<text x="727.05" y="406.9" font-size="12" fill="#111" text-anchor="middle">0xFF</text>
<rect x="880.3" y="394" width="270.0" height="18" fill="#d3b56b"/>
<text x="1015.3" y="406.9" font-size="12" fill="#111" text-anchor="middle">0x80</text>
<path d="M789.7 144 V154 M808.9 144 V154" stroke="#8e8e8e" stroke-width="1" opacity="0.45" fill="none"/>
<line x1="794.7" y1="149.8" x2="803.9" y2="149.8" stroke="#8e8e8e" stroke-width="1" opacity="0.7"/>
<path d="M790.0 149.8 L797.0 147.3 L797.0 152.3 Z M808.6 149.8 L801.6 147.3 L801.6 152.3 Z" fill="#8e8e8e"/>
<path d="M789.7 244 V254.5 M826.2 244 V254.5" stroke="#8e8e8e" stroke-width="1" opacity="0.45" fill="none"/>
<line x1="794.7" y1="249.8" x2="821.2" y2="249.8" stroke="#8e8e8e" stroke-width="1" opacity="0.7"/>
<path d="M790.0 249.8 L797.0 247.3 L797.0 252.3 Z M825.9 249.8 L818.9 247.3 L818.9 252.3 Z" fill="#8e8e8e"/>
<rect x="813" y="150.3" width="40.5" height="17" rx="3.5" fill="rgba(46,46,50,0.86)"/>
<text x="833.25" y="162.9" font-size="12.5" fill="#f2f2f2" text-anchor="middle" stroke="#f2f2f2" stroke-width="0.3">26 ns</text>
<rect x="830.3" y="250.6" width="40.5" height="17" rx="3.5" fill="rgba(46,46,50,0.86)"/>
<text x="850.55" y="263.2" font-size="12.5" fill="#f2f2f2" text-anchor="middle" stroke="#f2f2f2" stroke-width="0.3">50 ns</text>
</svg>
<div class="abs" style="left:239px;top:253.4px;width:132px;height:72.4px;border:1px solid #47474b;border-radius:6px;background:rgba(21,21,21,0.94)"></div>
<div class="abs" style="left:246px;top:261.9px;font-size:13px;line-height:16px;color:#ececec;white-space:nowrap;letter-spacing:-0.38px">Duty: 48 %</div>
<div class="abs" style="left:246px;top:281.9px;font-size:13px;line-height:16px;color:#ececec;white-space:nowrap;letter-spacing:-0.05px">Freq: 20 MHz</div>
<div class="abs" style="left:246px;top:301.9px;font-size:13px;line-height:16px;color:#ececec;white-space:nowrap;letter-spacing:0.17px">width<sup style="font-size:10px;line-height:0;vertical-align:5.5px">-1</sup>: 38.462 MHz</div>
<div id="side" class="abs"></div>
<svg class="abs" style="left:2432px;top:56px" width="51" height="572" viewBox="0 0 51 572" fill="none" stroke="#a6a6aa" stroke-width="1.9" font-family="Liberation Sans, sans-serif">
<path stroke-width="2.1" transform="translate(-0.6,0)" d="M16.5 78.5 Q16.5 77 19 76 L24 73.6 Q25.5 73 27 73.6 L32 76 Q34.5 77 34.5 78.500 L34.5 82.5 Q34.5 84 32 85 L27 87.4 Q25.5 88 24 87.4 L19 85 Q16.5 84 16.5 82.5 Z M16.5 78.5 Q16.5 80 19 81 L24 83.4 Q25.5 84 27 83.4 L32 81 Q34.500 80 34.5 78.5"/>
<path d="M16 160.800 L20.700 152.900 L29.800 152.900 L34.300 160.800 L29.800 168.700 L20.700 168.700 Z" stroke-width="2"/>
<path d="M15.3 241 L15.3 250 M35.2 241 L35.2 250 M15.3 245.5 L35.2 245.5" stroke-width="2"/>
<path d="M19.2 313 L30.8 313 L30.8 319.2 L25 325 L19.2 319.2 Z M25 325 L25 329.8" stroke-width="2"/>
<path d="M14.7 390.3 H22.1 V397.7 H14.7 Z M26.2 395.1 H33.3 V408.6 H19.1 V401.8 H33.3 M26.2 395.1 V408.6" stroke-width="1.9"/>
<path d="M18.2 473.6 H31.7 M18.2 478.4 H28.6 M18.2 483.1 H25.2 M18.2 487.5 H22.4" stroke-width="1.8"/>
<path d="M24.3 488.3 L25.4 484.6 L33.6 476.4 L36.3 479.1 L28.1 487.3 Z" fill="#a6a6aa" stroke="none"/>
<text x="19.9" y="165" font-size="11.5" fill="#a6a6aa" stroke="#a6a6aa" stroke-width="0.35" textLength="10.6" lengthAdjust="spacingAndGlyphs">1F</text>
<text x="25.2" y="241.300" font-size="12" font-weight="bold" fill="#a4a4a8" stroke="none" text-anchor="middle">3</text>
</svg>
<div id="bot" class="abs"></div>
<div class="abs" style="left:6px;top:628px;width:2477px;height:1px;background:#47474b"></div>
<div class="abs" style="left:140px;top:628px;width:9px;height:44px;background:#56575d"></div>
<div class="abs" style="left:149px;top:629px;width:114.5px;height:43px;background:#1a1a1a;border-top:2.5px solid #fff"></div>
<svg class="abs" style="left:6px;top:628px" width="300" height="44" viewBox="0 0 300 44" fill="none" stroke="#a0a0a4" stroke-width="1.3">
<path d="M13.500 22 Q13.500 20.600 16 19.500 L20.500 17.300 Q22.200 16.500 24 17.300 L28.500 19.500 Q31 20.600 31 22 L31 25 Q31 26.400 28.500 27.500 L24 29.700 Q22.200 30.500 20.500 29.700 L16 27.500 Q13.500 26.400 13.500 25 Z M13.500 22 Q13.500 23.400 16 24.500 L20.500 26.700 Q22.200 27.500 24 26.700 L28.500 24.500 Q31 23.400 31 22"/>
<path d="M111 21.700 L115 25.900 L119 21.700" stroke-width="1.2"/>
<path d="M238.200 20.500 L244.200 26.500 M244.200 20.500 L238.200 26.500" stroke="#b4b4b4" stroke-width="1.2"/>
<path d="M269.500 23.200 L281 23.200 M275.200 17.500 L275.200 29" stroke="#b4b4b4" stroke-width="1.6"/>
</svg>
<div class="abs" style="left:45px;top:642.5px;font-size:15px;line-height:18px;color:#98989c;white-space:nowrap">1 Device</div>
<div class="abs" style="left:166px;top:642.900px;font-size:15px;line-height:18px;color:#e8e8e8;white-space:nowrap;letter-spacing:0.1px">Session 0</div>
<div class="abs" style="left:2409.500px;top:643px;font-size:14px;line-height:16px;color:#8a8a8e;white-space:nowrap;letter-spacing:-0.15px">154 ns</div>
<svg class="abs" style="left:2452px;top:646px" width="14" height="12" viewBox="0 0 14 12"><path d="M3 8.500 L6.700 4.800 L10.400 8.500" stroke="#8a8a8e" stroke-width="1.4" fill="none"/></svg>
<div class="abs" style="left:6px;top:671.4px;width:2477px;height:1px;background:#7c8088"></div>
<div class="abs" style="left:2487.5px;top:0;width:1.5px;height:678px;background:#4c4b49"></div><div class="abs" style="left:0;top:676.5px;width:2489px;height:1.5px;background:#4c4b49"></div>
</body></html>
